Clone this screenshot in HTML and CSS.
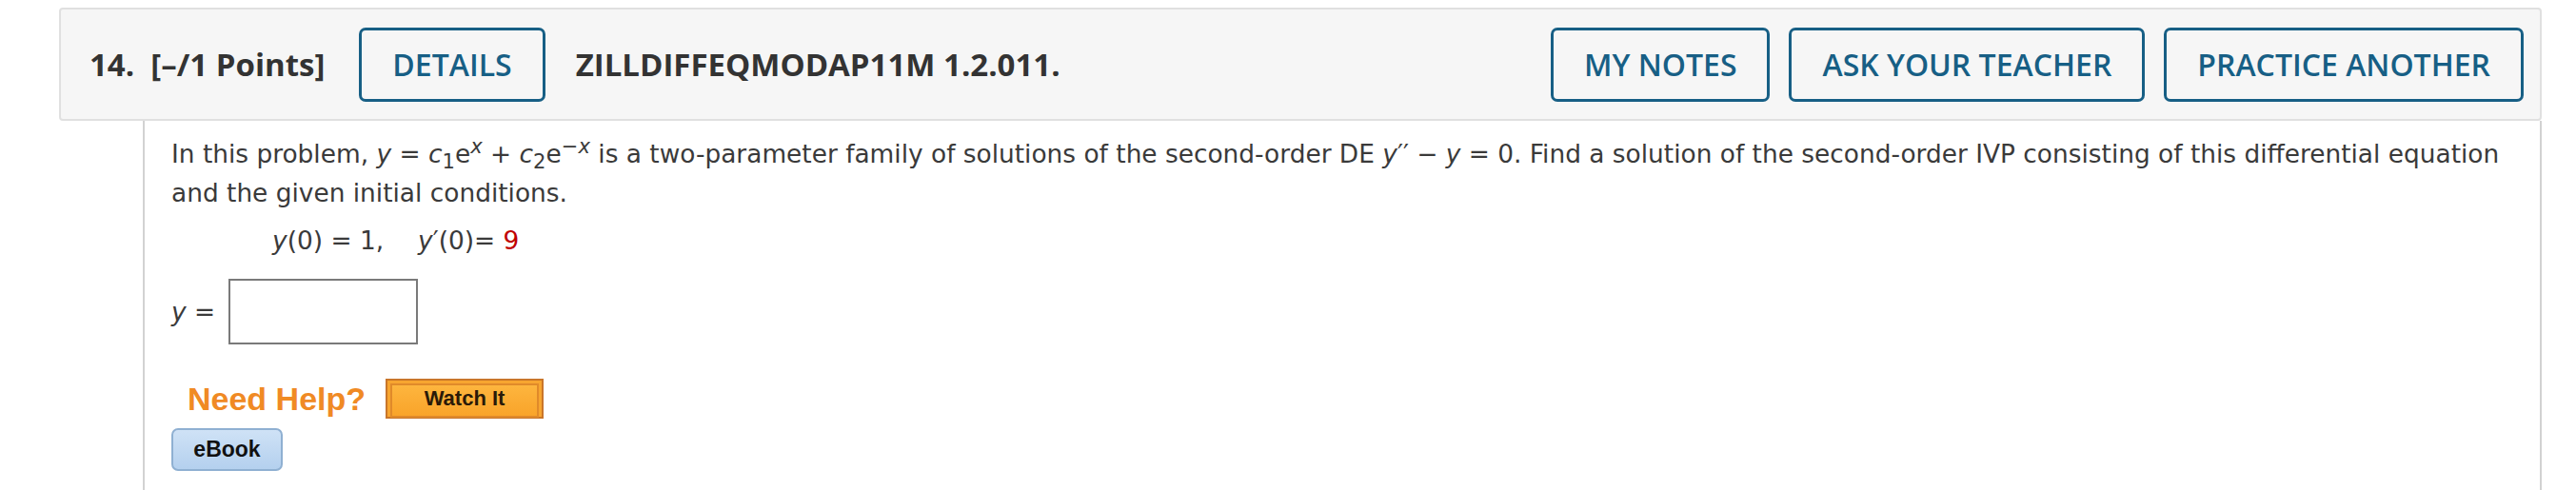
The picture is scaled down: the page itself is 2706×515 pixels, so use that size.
FILE: index.html
```html
<!DOCTYPE html>
<html lang="en">

<head>
    <meta charset="UTF-8">
    <title>Question 14</title>
    <link rel="stylesheet" href="styles.css">
</head>

<body>

    <div class="question">
        <div class="q-header">
            <span class="q-points">14.&nbsp; [&ndash;/1 Points]</span>
            <button class="q-btn">DETAILS</button>
            <span class="q-title">ZILLDIFFEQMODAP11M 1.2.011.</span>
            <div class="q-actions">
                <button class="q-btn">MY NOTES</button>
                <button class="q-btn">ASK YOUR TEACHER</button>
                <button class="q-btn">PRACTICE ANOTHER</button>
            </div>
        </div>

        <div class="q-body">
            <p class="q-text">
                In this problem, <i>y</i> = <i>c</i><sub>1</sub>e<sup><i>x</i></sup> + <i>c</i><sub>2</sub>e<sup>&minus;<i>x</i></sup>
                is a two-parameter family of solutions of the second-order DE <i>y</i>&prime;&prime; &minus; <i>y</i> = 0.
                Find a solution of the second-order IVP consisting of this differential equation and the given initial conditions.
            </p>

            <p class="q-conditions">
                <i>y</i>(0) = 1,<span class="cond-gap"></span><i>y</i>&prime;(0)= <span class="given">9</span>
            </p>

            <div class="answer-row">
                <span class="answer-label"><i>y</i> =</span>
                <input type="text" class="answer-box">
            </div>

            <div class="help-row">
                <span class="need-help">Need Help?</span>
                <button class="watch-btn"><span>Watch It</span></button>
            </div>
            <button class="ebook-btn">eBook</button>
        </div>
    </div>

</body>

</html>
```

FILE: styles.css
```css
body {
    margin: 0;
    padding: 8px 36px 0 62px;
    background: #fff;
    font-family: "DejaVu Sans", Verdana, sans-serif;
    color: #3a3a3a;
}

.q-header {
    display: flex;
    align-items: center;
    height: 115px;
    padding: 0 17px 0 30px;
    background: #f6f6f6;
    border: 2px solid #e0e0e0;
    border-radius: 4px;
    font-family: "Open Sans", sans-serif;
}

.q-points {
    font-size: 33px;
    font-weight: 700;
    color: #333;
    margin-right: 36px;
}

.q-title {
    font-size: 33px;
    font-weight: 700;
    color: #333;
    margin-left: 32px;
}

.q-actions {
    display: flex;
    gap: 20px;
    margin-left: auto;
}

.q-btn {
    height: 78px;
    padding: 0 32px;
    background: #f6f6f6;
    border: 3px solid #175f85;
    border-radius: 7px;
    color: #175f85;
    font-family: "Open Sans", sans-serif;
    font-size: 32px;
    font-weight: 600;
}

.q-body {
    margin-left: 88px;
    padding: 14px 28px 0 28px;
    border-left: 2px solid #d2d2d2;
    border-right: 2px solid #d2d2d2;
    height: 400px;
}

.q-text {
    margin: 0;
    font-size: 26.4px;
    line-height: 41px;
}

.q-text sub,
.q-text sup {
    font-size: 0.8em;
    line-height: 0;
}

.q-conditions {
    margin: 10px 0 0 106px;
    font-size: 26.4px;
    line-height: 40px;
}

.cond-gap {
    display: inline-block;
    width: 36px;
}

.given {
    color: #c00000;
}

.answer-row {
    display: flex;
    align-items: center;
    margin-top: 20px;
}

.answer-label {
    font-size: 26.4px;
    margin-right: 14px;
    white-space: nowrap;
}

.answer-box {
    width: 199px;
    height: 69px;
    box-sizing: border-box;
    border: 2px solid #7a7a7a;
    background: #fff;
}

.help-row {
    display: flex;
    align-items: center;
    margin: 36px 0 0 17px;
}

.need-help {
    font-family: "Liberation Sans", Arial, sans-serif;
    font-weight: 700;
    font-size: 34px;
    color: #f08a24;
    margin-right: 21px;
}

.watch-btn {
    width: 166px;
    height: 42px;
    padding: 3px;
    border: 2px solid #c9762a;
    background: #f7a530;
}

.watch-btn span {
    display: block;
    height: 100%;
    border: 2px solid #e08a2a;
    background: linear-gradient(#fdb53e, #f9a42a);
    font-family: "Liberation Sans", Arial, sans-serif;
    font-weight: 700;
    font-size: 22px;
    line-height: 28px;
    color: #2a1a08;
}

.ebook-btn {
    display: block;
    width: 117px;
    height: 45px;
    margin-top: 10px;
    border: 2px solid #8fb0d2;
    border-radius: 7px;
    background: linear-gradient(#cfe2f6, #b4d0ee);
    font-family: "Liberation Sans", Arial, sans-serif;
    font-weight: 700;
    font-size: 23px;
    color: #111;
}
```
